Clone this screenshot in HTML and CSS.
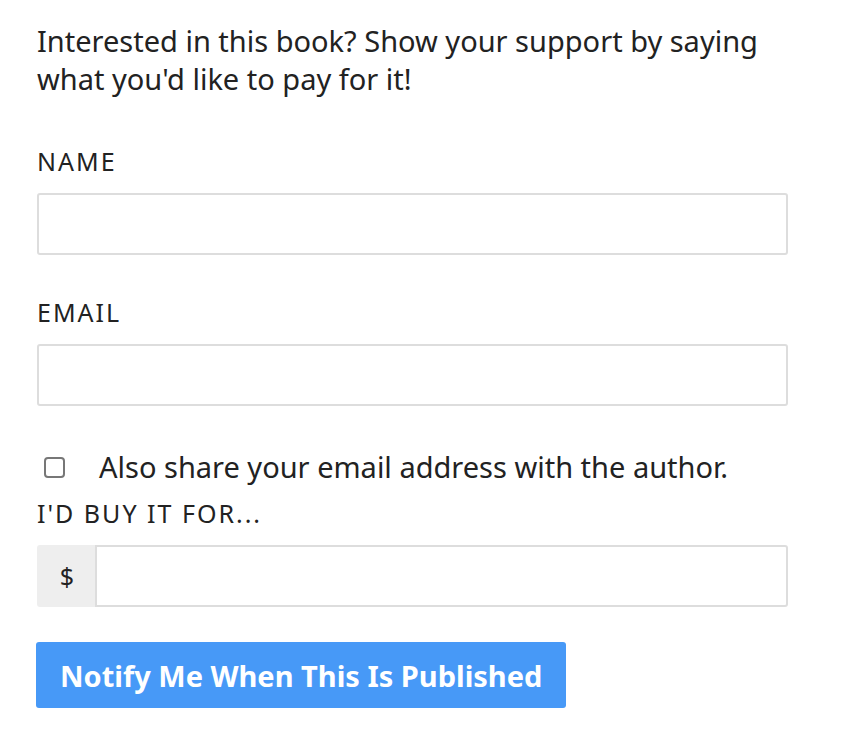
FILE: index.html
```html
<!DOCTYPE html>
<html lang="en">
<head>
  <meta charset="UTF-8" />
  <title>Book interest</title>
  <link rel="stylesheet" href="styles.css">
</head>
<body>
  <form class="interest">
    <p class="intro">Interested in this book? Show your support by saying what you'd like to pay for it!</p>

    <label class="field-label" for="name">Name</label>
    <input class="text-input" type="text" id="name" />

    <label class="field-label" for="email">Email</label>
    <input class="text-input" type="email" id="email" />

    <label class="share">
      <input type="checkbox" class="share-box" />
      <span>Also share your email address with the author.</span>
    </label>

    <label class="field-label price-label" for="price">I'd buy it for...</label>
    <div class="price-group">
      <span class="price-prefix">$</span>
      <input class="text-input price-input" type="text" id="price" />
    </div>

    <button type="button" class="btn-notify">Notify Me When This Is Published</button>
  </form>
</body>
</html>
```

FILE: styles.css
```css
body {
  margin: 0;
  padding: 22px 37px;
  background: #fff;
  font-family: "Noto Sans", "Open Sans", sans-serif;
  color: #222;
}
.interest {
  width: 751px;
  display: flex;
  flex-direction: column;
  align-items: flex-start;
}
.intro {
  margin: 0 0 48px;
  font-size: 29px;
  line-height: 38px;
  width: 751px;
}
.field-label {
  font-size: 25px;
  line-height: 30px;
  letter-spacing: 2px;
  text-transform: uppercase;
  margin-bottom: 17px;
  color: #222;
}
.text-input {
  box-sizing: border-box;
  width: 751px;
  height: 62px;
  border: 2px solid #dddddd;
  border-radius: 3px;
  background: #fff;
  font-size: 24px;
  padding: 0 14px;
  margin: 0 0 42px;
  font-family: inherit;
}
.share {
  display: flex;
  align-items: center;
  font-size: 29px;
  line-height: 36px;
  margin-top: 1px;
  margin-bottom: 13px;
  color: #222;
}
.share-box {
  box-sizing: border-box;
  appearance: none;
  width: 21px;
  height: 21px;
  margin: 0 34px 0 7px;
  border: 2px solid #777;
  border-radius: 4px;
  background: #fff;
}
.price-group {
  display: flex;
  width: 751px;
  margin-bottom: 35px;
}
.price-prefix {
  box-sizing: border-box;
  width: 58px;
  height: 62px;
  display: flex;
  align-items: center;
  justify-content: center;
  background: #eeeeee;
  border: 2px solid #eeeeee;
  border-right: none;
  border-radius: 3px 0 0 3px;
  font-size: 25px;
  color: #222;
}
.text-input.price-input {
  width: auto;
  flex: 1;
  margin: 0;
  border-radius: 0 3px 3px 0;
}
.btn-notify {
  height: 66px;
  padding: 0 24px;
  margin-left: -1px;
  border: none;
  border-radius: 3px;
  background: #4799f7;
  color: #fff;
  font-family: inherit;
  font-size: 29px;
  font-weight: 700;
  cursor: pointer;
}
```
